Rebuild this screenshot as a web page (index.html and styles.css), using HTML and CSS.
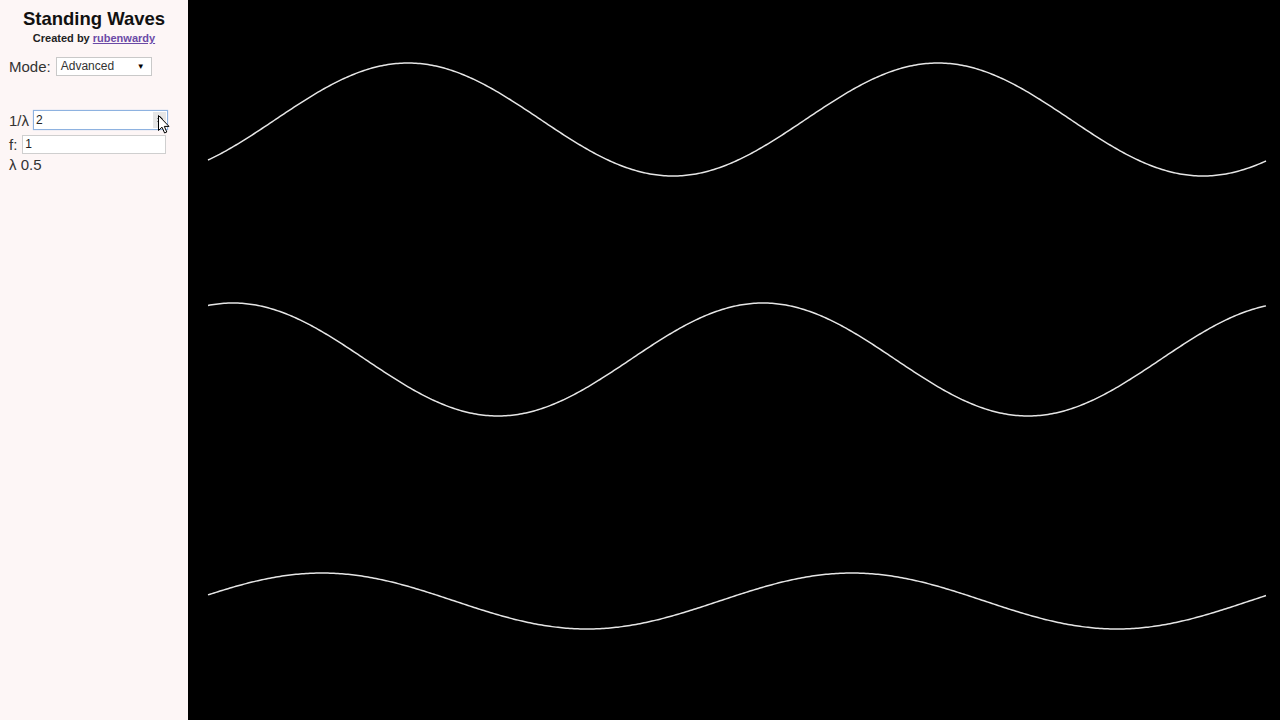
FILE: index.html
```html
<!DOCTYPE html>
<html>
<head>
<meta charset="utf-8">
<link rel="stylesheet" href="styles.css">
</head>
<body>
<div class="page">
  <aside class="sidebar">
    <h1 class="title">Standing Waves</h1>
    <div class="credit">Created by <a href="#" class="link">rubenwardy</a></div>
    <div class="mode-row">
      <span class="label">Mode:</span>
      <div class="select"><span>Advanced</span><span class="arrow">&#9660;</span></div>
    </div>
    <div class="field-row first">
      <span class="label">1/λ</span>
      <div class="input focused">
        <span class="val">2</span>
        <span class="spin"><svg width="8" height="12" viewBox="0 0 8 12"><path d="M1 5 L4 2 L7 5 Z" fill="#333"/><path d="M1 7 L4 10 L7 7 Z" fill="#333"/></svg></span>
        <svg class="cursor" width="12" height="19" viewBox="0 0 12 19"><path d="M0.5 0.5 L0.5 15.5 L4 12.2 L6.6 18 L8.8 17 L6.3 11.4 L11 11.4 Z" fill="#fff" stroke="#000" stroke-width="1"/></svg>
      </div>
    </div>
    <div class="field-row">
      <span class="label">f:</span>
      <div class="input f-input"><span class="val">1</span></div>
    </div>
    <div class="lambda">λ 0.5</div>
  </aside>
  <main class="canvas">
    <svg class="waves" width="1092" height="720" viewBox="188 0 1092 720">
      <path id="w1" fill="none" stroke="#e6e6e6" stroke-width="1.5"/>
      <path id="w2" fill="none" stroke="#e6e6e6" stroke-width="1.5"/>
      <path id="w3" fill="none" stroke="#e6e6e6" stroke-width="1.5"/>
    </svg>
  </main>
</div>
<script src="script.js"></script>
</body>
</html>
```
FILE: styles.css
```css
html, body { margin: 0; padding: 0; }
body { background: #000; font-family: "Liberation Sans", Arial, sans-serif; color: #222; }
.page { display: flex; width: 1280px; height: 720px; overflow: hidden; }
.sidebar { width: 188px; flex: none; background: #fdf6f6; padding: 0 0 0 9px; box-sizing: border-box; display: flex; flex-direction: column; }
.title { margin: 8px 0 0 -9px; font-size: 18.5px; line-height: 22px; font-weight: bold; text-align: center; color: #111; }
.credit { margin: 1px 0 0 -9px; font-size: 11px; line-height: 14px; font-weight: bold; text-align: center; color: #222; }
.link { color: #6b4aa6; text-decoration: underline; }
.mode-row { display: flex; align-items: center; margin-top: 11px; height: 20px; }
.label { font-size: 15px; color: #333; }
.select { margin-left: 5px; width: 96px; height: 19px; box-sizing: border-box; border: 1px solid #c9c9c9; background: #fff; display: flex; align-items: center; justify-content: space-between; padding: 0 6px 0 4px; font-size: 12px; color: #333; }
.select .arrow { font-size: 8px; color: #000; }
.field-row { display: flex; align-items: center; margin-top: 4px; height: 20px; }
.field-row.first { margin-top: 34px; }
.input { position: relative; margin-left: 4px; height: 20px; box-sizing: border-box; border: 1px solid #cfcfcf; background: #fff; display: flex; align-items: center; padding-left: 2px; font-size: 12px; color: #222; }
.input.focused { width: 135px; border-color: #8eb2e0; box-shadow: 0 0 1px #a9c6ee; }
.f-input { width: 144px; margin-left: 5px; height: 19px; }
.spin { position: absolute; right: 1px; top: 1px; width: 13px; height: 16px; background: #e6e6e6; display: flex; align-items: center; justify-content: center; }
.cursor { position: absolute; left: 124px; top: 4px; }
.lambda { margin-top: 2px; font-size: 15px; line-height: 18px; color: #333; }
.canvas { flex: 1; background: #000; height: 720px; }
.waves { display: block; }
```
FILE: script.js
```js
(function () {
  var L = 530;
  function build(id, cy, amp, peak) {
    var d = "";
    for (var x = 208; x <= 1266; x += 2) {
      var y = cy - amp * Math.cos(2 * Math.PI * (x - peak) / L);
      d += (x === 208 ? "M" : " L") + x + " " + y.toFixed(2);
    }
    document.getElementById(id).setAttribute("d", d);
  }
  build("w1", 119.5, 56.5, 408);
  build("w2", 359.5, 56.5, 763);
  build("w3", 601, 28, 852);
})();
```
